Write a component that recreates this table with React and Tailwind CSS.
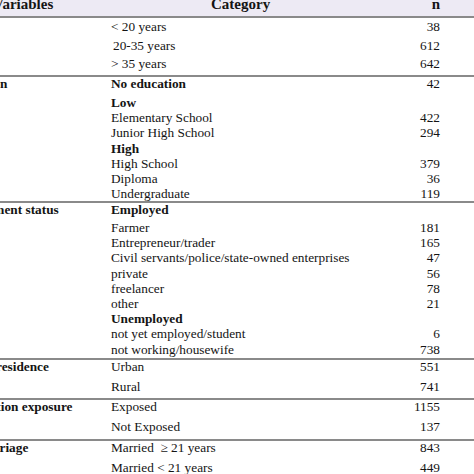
import React from "react";

const Row = ({ label, cat, n, bold, labelClass = "", catClass = "", className = "" }) => {
    return (
        <div className={`grid grid-cols-[162px_1fr_auto] pr-[34px] ${className}`}>
            <div className={`font-bold whitespace-nowrap ${labelClass}`}>{label}</div>
            <div className={`whitespace-nowrap ${bold ? "font-bold" : ""} ${catClass}`}>{cat}</div>
            <div className="text-right">{n}</div>
        </div>
    );
};

const Line = () => <div className="h-[2px] bg-[#8a8a8a]" />;

const App = () => {
    return (
        <div className="w-[474px] h-[474px] overflow-hidden bg-white text-[#141414] font-['Liberation_Serif','Times_New_Roman',serif] text-[13.3px]">
            <div className="ml-[-51px] w-[525px]">
                {/* header */}
                <div className="grid grid-cols-[162px_1fr_auto] pr-[34px] h-[16px] bg-[#edeaf4] text-[15px] leading-[8px] font-bold">
                    <div className="pl-[44px]">Variables</div>
                    <div className="pl-[100px]">Category</div>
                    <div className="text-right">n</div>
                </div>
                <Line />

                {/* age */}
                <div className="pb-[1.5px]">
                    <Row className="leading-[18.5px]" label="Age" cat="< 20 years" n="38" />
                    <Row className="leading-[18.5px]" catClass="pl-[2px]" cat="20-35 years" n="612" />
                    <Row className="leading-[18.5px]" cat="> 35 years" n="642" />
                </div>
                <Line />

                {/* education */}
                <div>
                    <Row className="leading-[13px]" label="Education" cat="No education" bold n="42" />
                    <Row className="leading-[15.2px] mt-[5px]" cat="Low" bold />
                    <Row className="leading-[15.2px]" cat="Elementary School" n="422" />
                    <Row className="leading-[15.2px]" cat="Junior High School" n="294" />
                    <Row className="leading-[15.2px]" cat="High" bold />
                    <Row className="leading-[15.2px]" cat="High School" n="379" />
                    <Row className="leading-[15.2px]" cat="Diploma" n="36" />
                    <Row className="leading-[15.2px]" cat="Undergraduate" n="119" />
                </div>
                <Line />

                {/* employment */}
                <div className="pb-[1px]">
                    <Row className="leading-[14.5px] pb-[2px]" label="Employment status" cat="Employed" bold />
                    <Row className="leading-[15.2px]" cat="Farmer" n="181" />
                    <Row className="leading-[15.2px]" cat="Entrepreneur/trader" n="165" />
                    <Row className="leading-[15.2px]" cat="Civil servants/police/state-owned enterprises" n="47" />
                    <Row className="leading-[15.2px]" cat="private" n="56" />
                    <Row className="leading-[15.2px]" cat="freelancer" n="78" />
                    <Row className="leading-[15.2px]" cat="other" n="21" />
                    <Row className="leading-[15.2px]" cat="Unemployed" bold />
                    <Row className="leading-[15.2px]" cat="not yet employed/student" n="6" />
                    <Row className="leading-[15.2px]" cat="not working/housewife" n="738" />
                </div>
                <Line />

                {/* residence */}
                <div className="flex flex-col gap-[6px] pb-[4.5px]">
                    <Row className="leading-[14px]" labelClass="ml-[-1px]" label="Place of residence" cat="Urban" n="551" />
                    <Row className="leading-[14px]" cat="Rural" n="741" />
                </div>
                <Line />

                {/* exposure */}
                <div className="flex flex-col gap-[6px] pb-[4.5px]">
                    <Row className="leading-[14px]" label="Information exposure" cat="Exposed" n="1155" />
                    <Row className="leading-[14px]" cat="Not Exposed" n="137" />
                </div>
                <Line />

                {/* marriage */}
                <div className="flex flex-col gap-[6px] pb-[4.5px]">
                    <Row className="leading-[14px]" labelClass="ml-[-13px]" label="Age of marriage" cat={"Married\u00a0 \u2265 21 years"} n="843" />
                    <Row className="leading-[14px]" cat="Married < 21 years" n="449" />
                </div>
            </div>
        </div>
    );
};

export default App;
